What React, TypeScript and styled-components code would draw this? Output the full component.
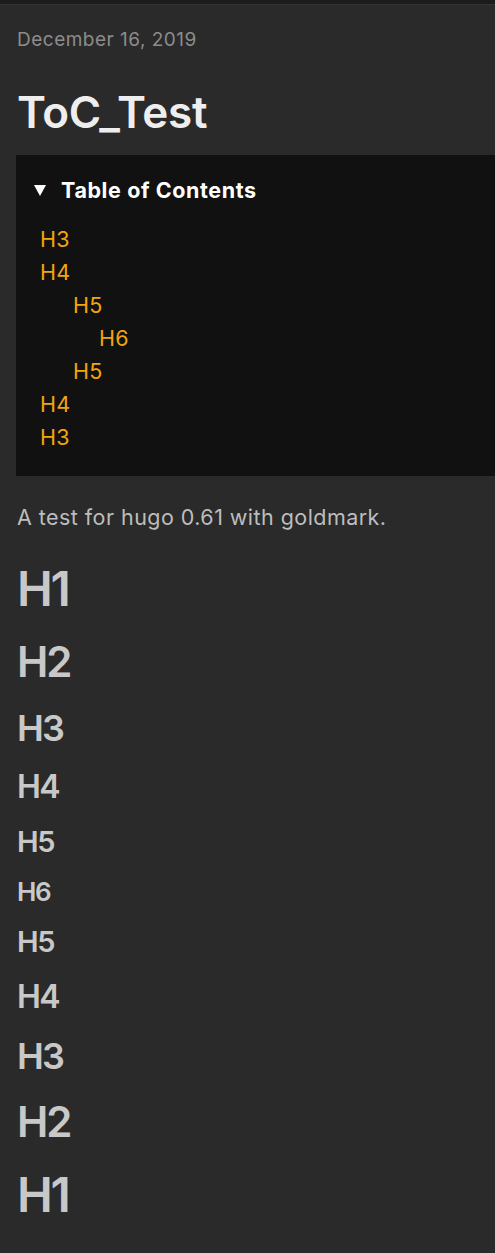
import React from 'react';
import styled, { createGlobalStyle } from 'styled-components';

const GlobalStyle = createGlobalStyle`
  html, body {
    margin: 0;
    padding: 0;
    background: #2a2a2a;
    overflow-x: hidden;
  }
  body {
    font-family: Inter, 'Noto Sans', 'Liberation Sans', sans-serif;
    -webkit-font-smoothing: antialiased;
  }
`;

const TopBar = styled.div`
  height: 4px;
  background: #1c1c1c;
  border-bottom: 1px solid #333333;
`;

const Article = styled.article`
  padding: 0 17px 40px;
  overflow: hidden;
`;

const PostDate = styled.div`
  margin-top: 23px;
  font-size: 19px;
  line-height: 24px;
  letter-spacing: 0.5px;
  color: #8c8c8c;
`;

const Title = styled.h1`
  margin: 34px 0 17px;
  font-size: 44px;
  line-height: 52px;
  font-weight: 600;
  color: #eeeeee;
  letter-spacing: -0.3px;
`;

const TocBox = styled.details`
  margin: 0 -60px 0 -1px;
  padding: 23px 24px 22px 18px;
  background: #111111;
`;

const TocSummary = styled.summary`
  display: flex;
  align-items: center;
  gap: 15px;
  list-style: none;
  font-size: 21.5px;
  line-height: 24px;
  font-weight: 700;
  letter-spacing: 0.6px;
  color: #ffffff;
  cursor: pointer;
  &::-webkit-details-marker {
    display: none;
  }
`;

const Caret = styled.span`
  width: 0;
  height: 0;
  border-left: 6.5px solid transparent;
  border-right: 6.5px solid transparent;
  border-top: 11px solid #ffffff;
`;

const TocList = styled.ul<{ $indent: number }>`
  list-style: none;
  margin: 0;
  padding: 0 0 0 ${p => p.$indent}px;
`;

const TocRoot = styled(TocList)`
  margin-top: 21px;
`;

const TocLink = styled.a`
  display: block;
  font-size: 21.5px;
  line-height: 33px;
  letter-spacing: 0.2px;
  color: #f2a60c;
  text-decoration: none;
`;

const Lead = styled.p`
  margin: 27px 0 21px;
  font-size: 21.5px;
  line-height: 28px;
  letter-spacing: 0.45px;
  color: #bdbdbd;
`;

const Heading = styled.div<{ $size: number; $block: number }>`
  margin: 0;
  font-size: ${p => p.$size}px;
  line-height: ${p => p.$block}px;
  font-weight: 600;
  letter-spacing: -0.05em;
  color: #c8c8c8;
`;

const headingSizes: Record<number, [number, number]> = {
  1: [48, 74],
  2: [42, 72],
  3: [36, 60],
  4: [32, 58],
  5: [29, 52],
  6: [26, 48],
};

const headingOrder = [1, 2, 3, 4, 5, 6, 5, 4, 3, 2, 1];

export default function App() {
  return (
    <>
      <GlobalStyle />
      <TopBar />
      <Article>
        <PostDate>December 16, 2019</PostDate>
        <Title>ToC_Test</Title>
        <TocBox open>
          <TocSummary>
            <Caret />
            Table of Contents
          </TocSummary>
          <TocRoot $indent={6}>
            <li><TocLink href="#h3">H3</TocLink></li>
            <li>
              <TocLink href="#h4">H4</TocLink>
              <TocList $indent={33}>
                <li>
                  <TocLink href="#h5">H5</TocLink>
                  <TocList $indent={26}>
                    <li><TocLink href="#h6">H6</TocLink></li>
                  </TocList>
                </li>
                <li><TocLink href="#h5-1">H5</TocLink></li>
              </TocList>
            </li>
            <li><TocLink href="#h4-1">H4</TocLink></li>
            <li><TocLink href="#h3-1">H3</TocLink></li>
          </TocRoot>
        </TocBox>
        <Lead>A test for hugo 0.61 with goldmark.</Lead>
        {headingOrder.map((level, i) => (
          <Heading
            key={i}
            as={`h${level}` as 'h1'}
            $size={headingSizes[level][0]}
            $block={headingSizes[level][1]}
          >
            H{level}
          </Heading>
        ))}
      </Article>
    </>
  );
}
